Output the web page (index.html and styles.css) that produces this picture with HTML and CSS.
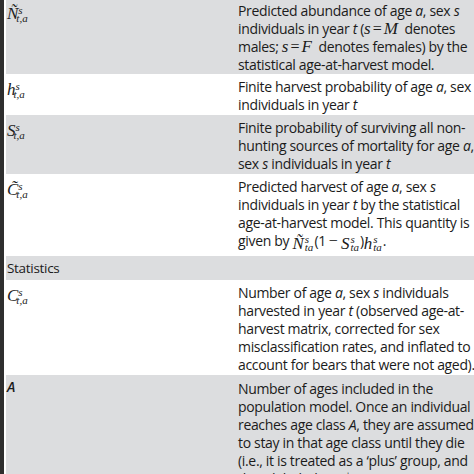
FILE: index.html
```html
<!DOCTYPE html>
<html>
<head>
<meta charset="utf-8">
<link rel="stylesheet" href="styles.css">
</head>
<body>
<div class="page">
  <div class="strip"></div>
  <div class="table">
    <div class="row gray r1">
      <div class="sym"><span class="m"><span class="base">Ñ</span><span class="scripts"><span class="sup">s</span><span class="sub">t,a</span></span></span></div>
      <div class="desc">Predicted abundance of age <i>a</i>, sex <i>s</i><br>individuals in year <i>t</i> (<span class="mi">s</span><span class="op rel">=</span><span class="mi">M</span>&nbsp; denotes<br>males; <span class="mi">s</span><span class="op rel">=</span><span class="mi">F</span>&nbsp; denotes females) by the<br>statistical age-at-harvest model.</div>
    </div>
    <div class="row">
      <div class="sym"><span class="m"><span class="base">h</span><span class="scripts"><span class="sup">s</span><span class="sub">t,a</span></span></span></div>
      <div class="desc">Finite harvest probability of age <i>a</i>, sex <i>s</i><br>individuals in year <i>t</i></div>
    </div>
    <div class="row gray">
      <div class="sym"><span class="m"><span class="base">S</span><span class="scripts"><span class="sup">s</span><span class="sub">t,a</span></span></span></div>
      <div class="desc">Finite probability of surviving all non-<br>hunting sources of mortality for age <i>a</i>,<br>sex <i>s</i> individuals in year <i>t</i></div>
    </div>
    <div class="row r4">
      <div class="sym"><span class="m"><span class="base">C̃</span><span class="scripts"><span class="sup">s</span><span class="sub">t,a</span></span></span></div>
      <div class="desc">Predicted harvest of age <i>a</i>, sex <i>s</i><br>individuals in year <i>t</i> by the statistical<br>age-at-harvest model. This quantity is<br>given by <span class="im"><span class="mi">Ñ</span><span class="iscripts"><span class="sup">s</span><span class="sub">ta</span></span></span>(1<span class="op bin">−</span><span class="im"><span class="mi">S</span><span class="iscripts"><span class="sup">s</span><span class="sub">ta</span></span></span>)<span class="im"><span class="mi">h</span><span class="iscripts"><span class="sup">s</span><span class="sub">ta</span></span></span>.</div>
    </div>
    <div class="row gray section">
      <div class="sect">Statistics</div>
    </div>
    <div class="row">
      <div class="sym"><span class="m"><span class="base">C</span><span class="scripts"><span class="sup">s</span><span class="sub">t,a</span></span></span></div>
      <div class="desc">Number of age <i>a</i>, sex <i>s</i> individuals<br>harvested in year <i>t</i> (observed age-at-<br>harvest matrix, corrected for sex<br>misclassification rates, and inflated to<br>account for bears that were not aged).</div>
    </div>
    <div class="row gray r7">
      <div class="sym"><span class="asym">A</span></div>
      <div class="desc">Number of ages included in the<br>population model. Once an individual<br>reaches age class <i>A</i>, they are assumed<br>to stay in that age class until they die<br>(i.e., it is treated as a ‘plus’ group, and<br>thus, labeled as <i>A</i><sup class="plus">+</sup>).</div>
    </div>
  </div>
</div>
</body>
</html>
```

FILE: styles.css
```css
html, body {
  margin: 0;
  padding: 0;
  background: #ffffff;
}
body {
  width: 474px;
  height: 474px;
  overflow: hidden;
  font-family: "Open Sans", "Noto Sans", sans-serif;
  color: #1b1b1b;
}
.page {
  display: flex;
  height: 474px;
}
.strip {
  width: 4px;
  flex: none;
  background: #2e2e2e;
}
.table {
  flex: 1;
  margin-left: 2px;
  display: flex;
  flex-direction: column;
}
.row {
  display: flex;
  padding: 4px 0 1px 0;
  background: #ffffff;
}
.row.gray {
  background: #dcdddf;
}
.row.r1 {
  padding: 2px 0 0 0;
}
.row.r4 {
  padding-bottom: 3px;
}
.row.r7 {
  padding-top: 5px;
}
.row.section {
  padding: 3px 0 3px 0;
}
.sym {
  width: 231px;
  flex: none;
  padding-left: 1px;
}
.desc {
  flex: 1;
  font-size: 14px;
  line-height: 18px;
  letter-spacing: -0.33px;
  white-space: nowrap;
}
.desc i {
  font-style: italic;
}
.m {
  display: inline-flex;
  align-items: flex-start;
  font-family: "Liberation Serif", serif;
  font-style: italic;
  color: #222;
}
.m .base {
  font-size: 17px;
  line-height: 20px;
}
.scripts {
  display: inline-flex;
  flex-direction: column;
  font-size: 11px;
  line-height: 8px;
  padding-top: 2px;
}
.scripts .sub {
  margin-left: -2px;
}
.mi {
  font-family: "Liberation Serif", serif;
  font-style: italic;
  font-size: 17px;
  letter-spacing: 0;
}
.op {
  font-family: "Liberation Serif", serif;
  font-size: 16px;
  letter-spacing: 0;
}
.op.rel {
  margin: 0 2px;
}
.op.bin {
  margin: 0 3px;
}
.im {
  display: inline-flex;
  align-items: flex-start;
  vertical-align: -3px;
}
.iscripts {
  display: inline-flex;
  flex-direction: column;
  font-family: "Liberation Serif", serif;
  font-style: italic;
  font-size: 11px;
  line-height: 8px;
  letter-spacing: 0;
  padding-left: 1px;
  padding-right: 1px;
}
.sect {
  font-size: 13.5px;
  line-height: 18px;
  letter-spacing: -0.3px;
  padding-left: 1px;
}
.asym {
  display: block;
  font-family: "Open Sans", sans-serif;
  font-style: italic;
  font-weight: 600;
  font-size: 14px;
  line-height: 14px;
}
.plus {
  font-size: 9px;
  line-height: 0;
}
```
